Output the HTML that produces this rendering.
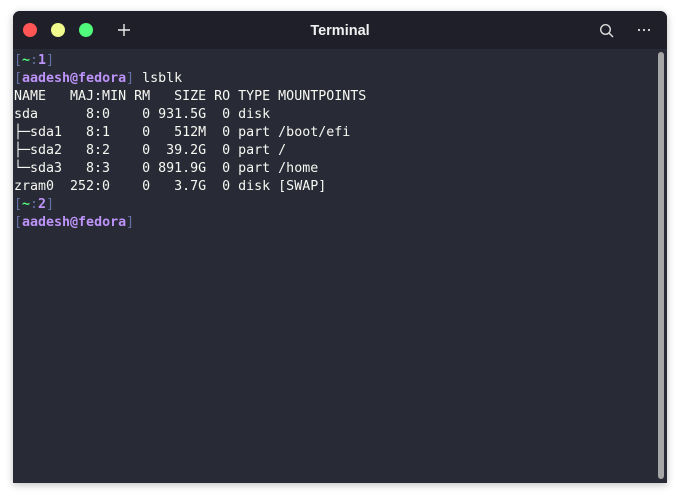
<!DOCTYPE html>
<html><head><meta charset="utf-8"><style>
html,body{margin:0;padding:0;width:680px;height:498px;background:#fff;overflow:hidden}
.win{position:absolute;left:13px;top:11px;width:654px;height:472px;background:#282a36;border-radius:7px 7px 0 0;overflow:hidden;box-shadow:0 2px 8px rgba(0,0,0,.25)}
.hd{position:absolute;left:0;top:0;width:100%;height:38px;background:#1e1f29}
.dot{position:absolute;top:12px;width:14px;height:14px;border-radius:50%}
.title{position:absolute;left:0;right:0;top:12px;text-align:center;color:#f0f0f0;font:bold 14.5px "Liberation Sans",sans-serif}
.term{position:absolute;left:1px;top:41px;margin:0;color:#f8f8f2;font:13.3px/18px "DejaVu Sans Mono",monospace;white-space:pre}
.b{color:#6272a4}.g{color:#50fa7b;font-weight:bold}.p{color:#bd93f9;font-weight:bold}
.sb{position:absolute;left:645px;top:41px;width:6px;height:427px;background:#a6a6a6;border-radius:3px}
</style></head><body>
<div class="win">
<div class="hd">
<div class="dot" style="left:10px;background:#ff5555"></div>
<div class="dot" style="left:38px;background:#f1fa8c"></div>
<div class="dot" style="left:66px;background:#50fa7b"></div>
<svg style="position:absolute;left:104px;top:12px" width="14" height="14"><path d="M7 1V13M1 7H13" stroke="#eee" stroke-width="1.4"/></svg>
<div class="title">Terminal</div>
<svg style="position:absolute;left:586px;top:12px" width="16" height="16"><circle cx="6.5" cy="6.5" r="4.8" fill="none" stroke="#ddd" stroke-width="1.4"/><path d="M10 10L14 14" stroke="#ddd" stroke-width="1.5"/></svg>
<svg style="position:absolute;left:624px;top:17px" width="16" height="4"><circle cx="2" cy="2" r="1.1" fill="#ddd"/><circle cx="7" cy="2" r="1.1" fill="#ddd"/><circle cx="12" cy="2" r="1.1" fill="#ddd"/></svg>
</div>
<pre class="term"><span class="b">[</span><span class="g">~</span><span class="b">:</span><span class="p">1</span><span class="b">]</span>
<span class="b">[</span><span class="p">aadesh@fedora</span><span class="b">]</span> lsblk
NAME   MAJ:MIN RM   SIZE RO TYPE MOUNTPOINTS
sda      8:0    0 931.5G  0 disk 
├─sda1   8:1    0   512M  0 part /boot/efi
├─sda2   8:2    0  39.2G  0 part /
└─sda3   8:3    0 891.9G  0 part /home
zram0  252:0    0   3.7G  0 disk [SWAP]
<span class="b">[</span><span class="g">~</span><span class="b">:</span><span class="p">2</span><span class="b">]</span>
<span class="b">[</span><span class="p">aadesh@fedora</span><span class="b">]</span></pre>
<div class="sb"></div>
</div>
</body></html>
